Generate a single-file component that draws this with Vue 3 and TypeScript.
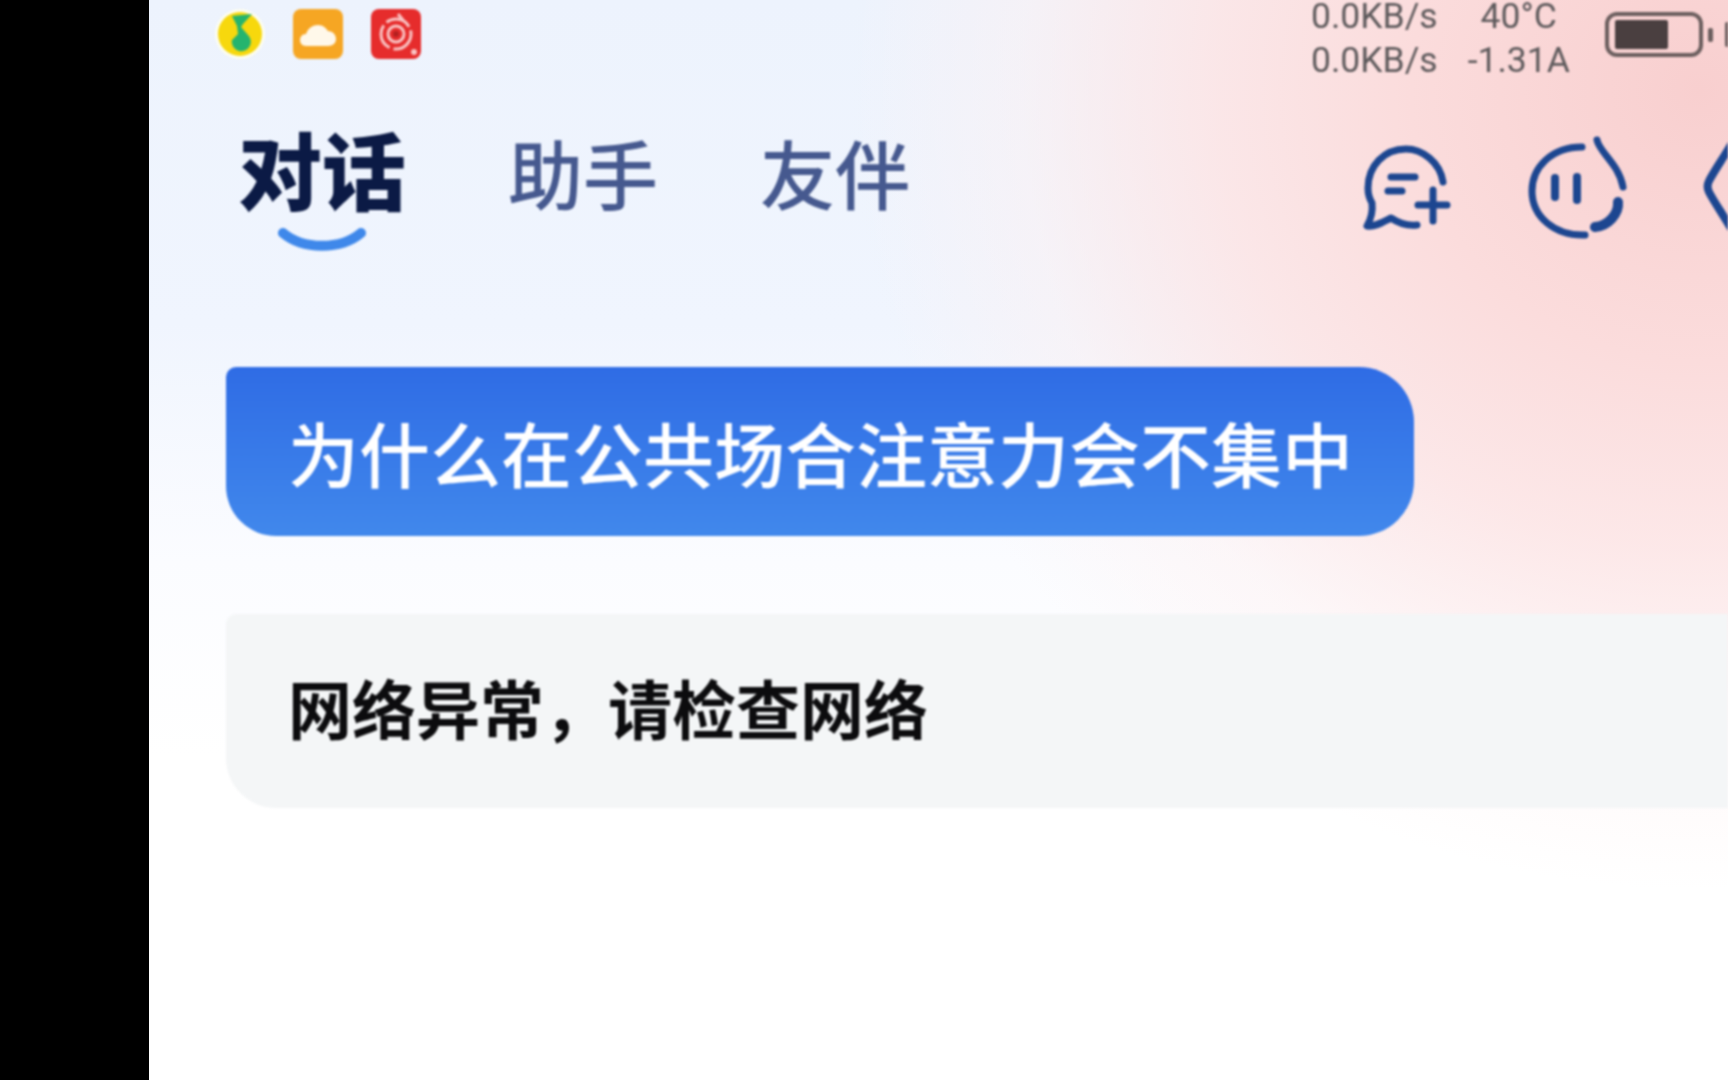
<template>
  <div class="phone">
    <div class="screen">
      <div class="status">
        <div class="apps">
          <svg class="app" width="50" height="50" viewBox="0 0 50 50">
            <circle cx="25" cy="25" r="25" fill="#fdfdf0" />
            <circle cx="25" cy="25" r="22" fill="#f7d80d" />
            <path d="M17 7 37 5 28 15 26 18 33 26A9.5 9.5 0 1 1 17 31L23 25 22 17Z" fill="#25b46e" />
          </svg>
          <svg class="app" width="50" height="50" viewBox="0 0 50 50">
            <rect width="50" height="50" rx="8" fill="#f6a623" />
            <path d="M13 37c-4 0-6-3-6-6s2-6 6-6c2-6 7-9 12-9 5 0 8 3 10 6 5 0 8 4 8 8s-3 7-8 7z" fill="#fff8ea" />
          </svg>
          <svg class="app" width="50" height="50" viewBox="0 0 50 50">
            <rect width="50" height="50" rx="8" fill="#e62c2c" />
            <circle cx="25" cy="25" r="15" fill="none" stroke="#f9c4c4" stroke-width="3" stroke-dasharray="26 4" />
            <circle cx="25" cy="25" r="8" fill="none" stroke="#f9c4c4" stroke-width="3" />
            <circle cx="25" cy="25" r="3" fill="#b42020" />
            <path d="M27 5l5 6" stroke="#f9c4c4" stroke-width="3" />
            <circle cx="43" cy="43" r="3" fill="#f9c4c4" />
          </svg>
        </div>
        <div class="net">
          <div class="net-col">
            <span>0.0KB/s</span>
            <span>0.0KB/s</span>
          </div>
          <div class="net-col net-end">
            <span>40°C</span>
            <span>-1.31A</span>
          </div>
        </div>
        <div class="battery">
          <div class="battery-body"><div class="battery-fill"></div></div>
          <div class="battery-tip"></div>
          <div class="battery-next"></div>
        </div>
      </div>

      <div class="header">
        <div class="tabs">
          <div v-for="tab in tabs" :key="tab.label" :class="['tab', { active: tab.active }]">
            {{ tab.label }}
            <svg v-if="tab.active" class="smile" width="90" height="30" viewBox="0 0 90 30">
              <path d="M6 7c20 17 58 17 78 0" fill="none" stroke="#3f88ea" stroke-width="10" stroke-linecap="round" />
            </svg>
          </div>
        </div>
        <div class="actions">
          <svg class="icon-chat" width="100" height="100" viewBox="0 0 100 100" fill="none" stroke="#1c4690" stroke-width="7" stroke-linecap="round" stroke-linejoin="round">
            <path d="M83 42C80 22 62 9 46 9 24 9 8 26 8 48c0 6 1 10 4 15 1 9-1 16-5 23 9 1 16-4 24-8 9 6 18 8 26 7" />
            <path d="M31 37h24M28 51h14M58 65h29M73 50v31" />
          </svg>
          <svg class="icon-face" width="105" height="105" viewBox="0 0 105 105" fill="none" stroke="#1c4690" stroke-width="7" stroke-linecap="round">
            <path d="M57 12C27 12 7 32 7 56c0 26 23 45 53 44" />
            <path d="M72 5c2 12 22 24 26 47" />
            <path d="M93 67c1 12-10 24-23 25" stroke-width="10" />
            <path d="M30 43v19M52 42v23" stroke-width="8" />
          </svg>
          <svg class="icon-next" width="28" height="105" viewBox="0 0 28 105" fill="none" stroke="#1c4690" stroke-width="8" stroke-linecap="round">
            <path d="M32 8C24 22 14 36 9 46c-2 4-2 7 0 11 5 10 15 24 23 38" />
          </svg>
        </div>
      </div>

      <div class="bubble">为什么在公共场合注意力会不集中</div>
      <div class="reply">网络异常，请检查网络</div>
    </div>
  </div>
</template>

<script setup lang="ts">
const tabs = [
  { label: '对话', active: true },
  { label: '助手', active: false },
  { label: '友伴', active: false },
];
</script>

<style>
html, body {
  margin: 0;
  background: #000;
  overflow: hidden;
}
</style>

<style scoped>
.phone {
  width: 1728px;
  height: 1080px;
  padding-left: 149px;
  box-sizing: border-box;
  background: #000;
  font-family: "Noto Sans CJK SC", "Noto Sans", sans-serif;
}

.screen {
  height: 100%;
  padding-left: 77px;
  overflow: hidden;
  background:
    radial-gradient(ellipse 850px 800px at 1551px 90px, #f8cfcf 0%, #fbdcdc 34%, rgba(253, 228, 228, 0.85) 57%, rgba(254, 240, 240, 0.45) 80%, rgba(255, 255, 255, 0) 100%),
    linear-gradient(180deg, #edf3fd 0%, #f0f5fe 30%, #fbfcff 52%, #fff 70%);
}

.status {
  display: flex;
  align-items: flex-start;
  height: 120px;
  filter: blur(0.8px);
}

.apps {
  display: flex;
  flex: none;
  gap: 28px;
  padding-top: 9px;
  margin-left: -11px;
  width: 1096px;
}

.app {
  flex: none;
}

.net {
  display: flex;
  flex: none;
  gap: 30px;
  color: #5e5a5c;
  font-family: "Roboto", sans-serif;
  font-size: 35.5px;
  line-height: 32px;
  width: 293px;
}

.net-col {
  display: flex;
  flex-direction: column;
  gap: 12px;
}

.net-end {
  align-items: center;
}

.battery {
  display: flex;
  flex: none;
  align-items: center;
  margin-top: 12px;
  margin-left: 1px;
}

.battery-body {
  width: 98px;
  height: 45px;
  box-sizing: border-box;
  border: 4px solid #6b5e5e;
  border-radius: 12px;
  padding: 4px 6px;
}

.battery-fill {
  width: 53px;
  height: 100%;
  background: #4a3f40;
  border-radius: 2px;
}

.battery-tip {
  width: 5px;
  height: 14px;
  margin-left: 5px;
  background: #6b5e5e;
  border-radius: 2px;
}

.battery-next {
  width: 3px;
  height: 25px;
  margin-left: 12px;
  background: #6b5e5e;
  border-radius: 2px 0 0 2px;
}

.header {
  display: flex;
  justify-content: space-between;
  height: 247px;
  filter: blur(0.8px);
}

.tabs {
  display: flex;
  align-items: flex-start;
  gap: 102px;
  padding-left: 12px;
}

.tab {
  position: relative;
  color: #46598f;
  font-size: 75px;
  font-weight: 500;
  line-height: 96px;
  padding-top: 4px;
}

.tab.active {
  color: #0b1a45;
  font-size: 84px;
  font-weight: 900;
  padding-top: 0;
}

.smile {
  position: absolute;
  left: 50%;
  top: 106px;
  margin-left: -45px;
}

.actions {
  display: flex;
  flex: none;
  gap: 65px;
  padding-top: 20px;
  width: 368px;
  height: 105px;
  box-sizing: border-box;
}

.actions svg {
  flex: none;
}

.icon-face,
.icon-next {
  margin-top: -5px;
}

.icon-next {
  margin-left: 5px;
}

.bubble {
  width: 1188px;
  height: 169px;
  box-sizing: border-box;
  padding-left: 62px;
  padding-bottom: 2px;
  display: flex;
  align-items: center;
  color: #fff;
  font-size: 71px;
  font-weight: 500;
  white-space: nowrap;
  background: linear-gradient(180deg, #2f6ce5 0%, #4188ec 100%);
  border-radius: 10px 55px 55px 50px;
  filter: blur(0.8px);
}

.reply {
  margin-top: 78px;
  height: 194px;
  box-sizing: border-box;
  padding-left: 62px;
  padding-bottom: 10px;
  display: flex;
  align-items: center;
  color: #0c0c0e;
  font-size: 64px;
  font-weight: 700;
  white-space: nowrap;
  background: #f4f6f7;
  border-radius: 10px 0 0 50px;
  filter: blur(0.8px);
}
</style>
